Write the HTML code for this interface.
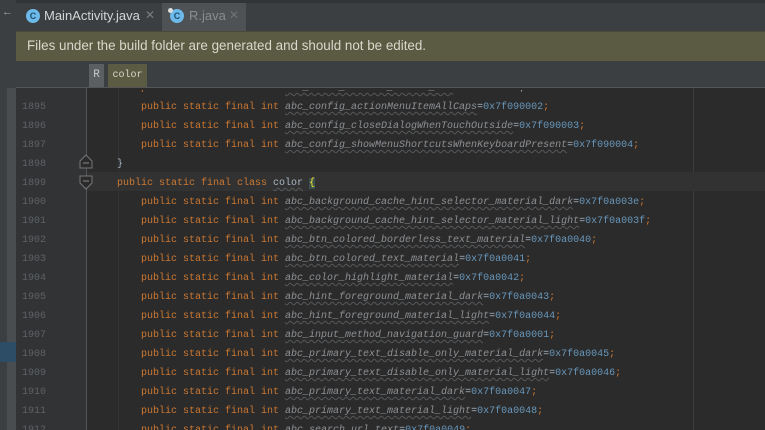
<!DOCTYPE html>
<html><head><meta charset="utf-8"><style>
*{margin:0;padding:0;box-sizing:border-box}
html,body{width:765px;height:430px;overflow:hidden}
body{background:#2b2b2b;position:relative;font-family:"Liberation Mono",monospace}
.abs{position:absolute}
.ln{position:absolute;left:22px;width:24px;font-size:10px;color:#5f6265;line-height:19px;font-family:"Liberation Mono",monospace;transform:translateY(2px)}
.cl{position:absolute;font-size:10px;line-height:19px;white-space:pre;color:#a9b7c6;transform:translateY(2px)}
.k{color:#cc7832}
.f{color:#8e9195;font-style:italic;text-decoration:underline wavy #55585b;text-decoration-thickness:1px;text-underline-offset:2px}
.n{color:#6897bb}
.ic{position:absolute;width:14px;height:14px;border-radius:50%;background:#6cb9ea;color:#1d4f74;font:bold 9px "Liberation Sans",sans-serif;text-align:center;line-height:14px}
</style></head><body>
<div class="abs" style="left:0;top:0;width:16px;height:430px;background:#3c3f41"></div>
<div class="abs" style="left:7px;top:88px;width:9px;height:342px;background:#4a4d4f"></div>
<div class="abs" style="left:0;top:342px;width:16px;height:20px;background:#2d4d66"></div>
<div class="abs" style="left:2px;top:6px;color:#aaa;font:11px 'Liberation Sans',sans-serif">←</div>
<div class="abs" style="left:16px;top:88px;width:70px;height:342px;background:#313335"></div>
<div class="abs" style="left:86px;top:88px;width:1px;height:342px;background:#555"></div>
<div class="abs" style="left:118px;top:88px;width:1px;height:342px;background:#313335"></div>
<div class="abs" style="left:693px;top:88px;width:1px;height:342px;background:#3d3d3d"></div>
<div class="abs" style="left:87px;top:172px;width:678px;height:19px;background:#323232"></div>
<div class="abs" style="left:16px;top:0;width:749px;height:32px;background:#3c3f41;border-top:3px solid #323436"></div>
<div class="ic" style="left:26px;top:9px">C</div>
<div class="abs" style="left:44px;top:8px;color:#d4d4d4;font:13px 'Liberation Sans',sans-serif">MainActivity.java</div>
<div class="abs" style="left:145px;top:8px;color:#7a7d80;font:12px 'Liberation Sans',sans-serif">✕</div>
<div class="abs" style="left:162px;top:3px;width:84px;height:28px;background:#4e5254"></div>
<div class="ic" style="left:170px;top:9px">C</div>
<div class="abs" style="left:168px;top:8px;width:5px;height:5px;border-radius:50%;background:#ddd"></div>
<div class="abs" style="left:189px;top:8px;color:#8a8d90;font:13px 'Liberation Sans',sans-serif">R.java</div>
<div class="abs" style="left:229px;top:8px;color:#6f7275;font:12px 'Liberation Sans',sans-serif">✕</div>
<div class="abs" style="left:16px;top:31px;width:749px;height:30px;background:#5b5b43;border-top:1px solid #494a3b"></div>
<div class="abs" style="left:27px;top:38px;color:#d8d8cc;font:13.4px 'Liberation Sans',sans-serif">Files under the build folder are generated and should not be edited.</div>
<div class="abs" style="left:16px;top:61px;width:749px;height:27px;background:#3c3f41;border-bottom:1px solid #555"></div>
<div class="abs" style="left:89px;top:64px;width:15px;height:23px;background:#5c5f62;color:#c8c8c8;font-size:11px;line-height:23px;text-align:center">R</div>
<div class="abs" style="left:108px;top:64px;width:39px;height:23px;background:#5b5b43;color:#d8d8cc;font-size:10px;line-height:23px;text-align:center">color</div>
<svg class="abs" style="left:78px;top:153px" width="16" height="38"><path d="M2 8 L8 2 L14 8 L14 15 L2 15 Z" fill="#2b2b2b" stroke="#777"/><path d="M5 10 H11" stroke="#888"/><path d="M2 23 H14 V30 L8 36 L2 30 Z" fill="#2b2b2b" stroke="#777"/><path d="M5 28 H11" stroke="#888"/></svg>
<div class="cl" style="top:77px;left:141px;clip-path:inset(11px 0 0 0)"><span class="k">public static final int </span><span class="f">abc_allow_stacked_button_bar</span>=<span class="n">0x7f090001</span>;</div>
<div class="ln" style="top:96px">1895</div><div class="cl" style="top:96px;left:141px"><span class="k">public static final int </span><span class="f">abc_config_actionMenuItemAllCaps</span>=<span class="n">0x7f090002</span><span class="k">;</span></div>
<div class="ln" style="top:115px">1896</div><div class="cl" style="top:115px;left:141px"><span class="k">public static final int </span><span class="f">abc_config_closeDialogWhenTouchOutside</span>=<span class="n">0x7f090003</span><span class="k">;</span></div>
<div class="ln" style="top:134px">1897</div><div class="cl" style="top:134px;left:141px"><span class="k">public static final int </span><span class="f">abc_config_showMenuShortcutsWhenKeyboardPresent</span>=<span class="n">0x7f090004</span><span class="k">;</span></div>
<div class="ln" style="top:153px">1898</div><div class="cl" style="top:153px;left:117px">}</div>
<div class="ln" style="top:172px">1899</div><div class="cl" style="top:172px;left:117px"><span class="k">public static final class </span><span style="text-decoration:underline wavy #55585b;text-underline-offset:2px">color</span> <span style="background:#3b514d;color:#ffef28">{</span></div>
<div class="ln" style="top:191px">1900</div><div class="cl" style="top:191px;left:141px"><span class="k">public static final int </span><span class="f">abc_background_cache_hint_selector_material_dark</span>=<span class="n">0x7f0a003e</span><span class="k">;</span></div>
<div class="ln" style="top:210px">1901</div><div class="cl" style="top:210px;left:141px"><span class="k">public static final int </span><span class="f">abc_background_cache_hint_selector_material_light</span>=<span class="n">0x7f0a003f</span><span class="k">;</span></div>
<div class="ln" style="top:229px">1902</div><div class="cl" style="top:229px;left:141px"><span class="k">public static final int </span><span class="f">abc_btn_colored_borderless_text_material</span>=<span class="n">0x7f0a0040</span><span class="k">;</span></div>
<div class="ln" style="top:248px">1903</div><div class="cl" style="top:248px;left:141px"><span class="k">public static final int </span><span class="f">abc_btn_colored_text_material</span>=<span class="n">0x7f0a0041</span><span class="k">;</span></div>
<div class="ln" style="top:267px">1904</div><div class="cl" style="top:267px;left:141px"><span class="k">public static final int </span><span class="f">abc_color_highlight_material</span>=<span class="n">0x7f0a0042</span><span class="k">;</span></div>
<div class="ln" style="top:286px">1905</div><div class="cl" style="top:286px;left:141px"><span class="k">public static final int </span><span class="f">abc_hint_foreground_material_dark</span>=<span class="n">0x7f0a0043</span><span class="k">;</span></div>
<div class="ln" style="top:305px">1906</div><div class="cl" style="top:305px;left:141px"><span class="k">public static final int </span><span class="f">abc_hint_foreground_material_light</span>=<span class="n">0x7f0a0044</span><span class="k">;</span></div>
<div class="ln" style="top:324px">1907</div><div class="cl" style="top:324px;left:141px"><span class="k">public static final int </span><span class="f">abc_input_method_navigation_guard</span>=<span class="n">0x7f0a0001</span><span class="k">;</span></div>
<div class="ln" style="top:343px">1908</div><div class="cl" style="top:343px;left:141px"><span class="k">public static final int </span><span class="f">abc_primary_text_disable_only_material_dark</span>=<span class="n">0x7f0a0045</span><span class="k">;</span></div>
<div class="ln" style="top:362px">1909</div><div class="cl" style="top:362px;left:141px"><span class="k">public static final int </span><span class="f">abc_primary_text_disable_only_material_light</span>=<span class="n">0x7f0a0046</span><span class="k">;</span></div>
<div class="ln" style="top:381px">1910</div><div class="cl" style="top:381px;left:141px"><span class="k">public static final int </span><span class="f">abc_primary_text_material_dark</span>=<span class="n">0x7f0a0047</span><span class="k">;</span></div>
<div class="ln" style="top:400px">1911</div><div class="cl" style="top:400px;left:141px"><span class="k">public static final int </span><span class="f">abc_primary_text_material_light</span>=<span class="n">0x7f0a0048</span><span class="k">;</span></div>
<div class="ln" style="top:419px">1912</div><div class="cl" style="top:419px;left:141px"><span class="k">public static final int </span><span class="f">abc_search_url_text</span>=<span class="n">0x7f0a0049</span><span class="k">;</span></div>
</body></html>
